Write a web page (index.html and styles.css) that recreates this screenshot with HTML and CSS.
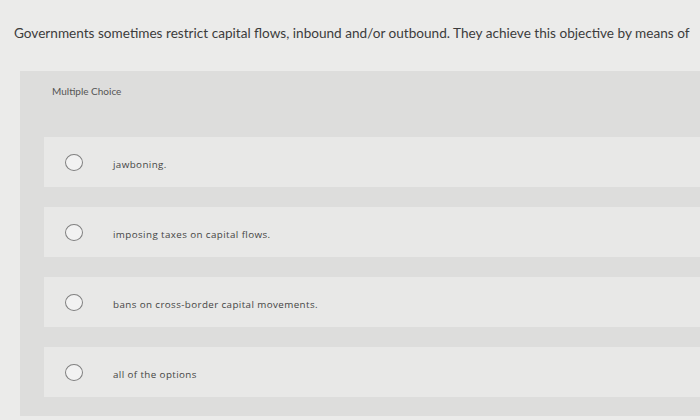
FILE: index.html
```html
<!DOCTYPE html>
<html lang="en">
  <head>
    <meta charset="utf-8" />
    <title>Multiple Choice</title>
    <link rel="stylesheet" href="styles.css">
  </head>
  <body>
    <p class="question">
      Governments sometimes restrict capital flows, inbound and/or outbound. They achieve this objective by means of
    </p>
    <main class="panel">
      <div class="panel-title">Multiple Choice</div>
      <div class="options">
        <label class="option">
          <span class="radio"></span>
          <span class="option-text">jawboning.</span>
        </label>
        <label class="option">
          <span class="radio"></span>
          <span class="option-text">imposing taxes on capital flows.</span>
        </label>
        <label class="option">
          <span class="radio"></span>
          <span class="option-text">bans on cross-border capital movements.</span>
        </label>
        <label class="option">
          <span class="radio"></span>
          <span class="option-text">all of the options</span>
        </label>
      </div>
    </main>
  </body>
</html>
```
FILE: styles.css
```css
body {
  margin: 0;
  background-color: #ebebea;
  font-family: Lato, "Open Sans", Arial, sans-serif;
  color: #3a3a3a;
  overflow: hidden;
}
.question {
  margin: 0;
  padding: 25px 0 0 14px;
  font-size: 13.6px;
  white-space: nowrap;
  color: #3c3c3c;
}
.panel {
  display: block;
  margin: 30px 0 0 20px;
  padding: 14px 0 20px 24px;
  background-color: #dddddc;
  height: 345px;
  box-sizing: border-box;
}
.panel-title {
  padding-left: 8px;
  font-size: 10px;
  color: #555;
}
.options {
  display: flex;
  flex-direction: column;
  gap: 20px;
  margin-top: 40px;
}
.option {
  display: flex;
  align-items: center;
  height: 50px;
  background-color: #e8e8e7;
  padding-left: 21px;
}
.radio {
  width: 18px;
  height: 17px;
  border: 1.5px solid #808080;
  border-radius: 50%;
  background-color: #f2f2f2;
  box-sizing: border-box;
}
.option-text {
  margin: 4px 0 0 30px;
  font-family: "Open Sans", Arial, sans-serif;
  font-size: 9.8px;
  letter-spacing: 0.4px;
  color: #444;
}
```
